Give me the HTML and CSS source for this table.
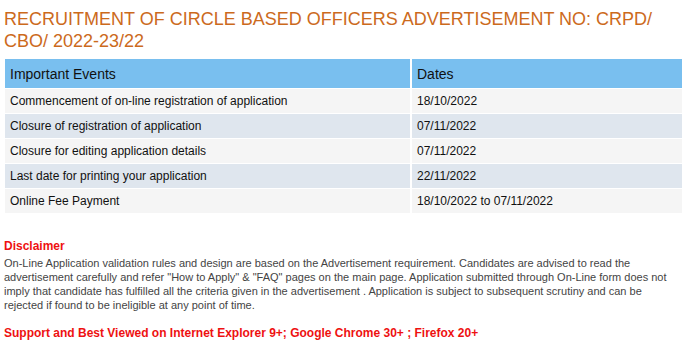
FILE: index.html
```html
<!DOCTYPE html>
<html>
<head>
<meta charset="utf-8">
<link rel="stylesheet" href="styles.css">
</head>
<body>
<div class="page">
  <h1 class="title">RECRUITMENT OF CIRCLE BASED OFFICERS ADVERTISEMENT NO: CRPD/ CBO/ 2022-23/22</h1>
  <table class="events">
    <thead>
      <tr><th class="c1">Important Events</th><th class="c2">Dates</th></tr>
    </thead>
    <tbody>
      <tr><td class="c1">Commencement of on-line registration of application</td><td class="c2">18/10/2022</td></tr>
      <tr><td class="c1">Closure of registration of application</td><td class="c2">07/11/2022</td></tr>
      <tr><td class="c1">Closure for editing application details</td><td class="c2">07/11/2022</td></tr>
      <tr><td class="c1">Last date for printing your application</td><td class="c2">22/11/2022</td></tr>
      <tr><td class="c1">Online Fee Payment</td><td class="c2">18/10/2022 to 07/11/2022</td></tr>
    </tbody>
  </table>
  <div class="disclaimer">
    <h2 class="disc-title">Disclaimer</h2>
    <p class="disc-text">On-Line Application validation rules and design are based on the Advertisement requirement. Candidates are advised to read the advertisement carefully and refer "How to Apply" &amp; "FAQ" pages on the main page. Application submitted through On-Line form does not imply that candidate has fulfilled all the criteria given in the advertisement . Application is subject to subsequent scrutiny and can be rejected if found to be ineligible at any point of time.</p>
    <p class="support">Support and Best Viewed on Internet Explorer 9+; Google Chrome 30+ ; Firefox 20+</p>
  </div>
</div>
</body>
</html>
```
FILE: styles.css
```css
html, body {
  margin: 0;
  padding: 0;
  background: #ffffff;
}
body {
  font-family: "Liberation Sans", Arial, sans-serif;
}
.page {
  padding: 8px 3px 0 4px;
}
.title {
  margin: 0 0 7px 0;
  font-size: 18px;
  font-weight: normal;
  line-height: 22px;
  color: #cc6a1c;
}
.events {
  width: 677px;
  margin-left: 1px;
  border-collapse: collapse;
  font-size: 12px;
  color: #111;
}
.events th {
  background: #79bfef;
  font-size: 14px;
  font-weight: normal;
  text-align: left;
  height: 29px;
  padding: 0 5px;
  border-bottom: 1px solid #fff;
}
.events td {
  height: 24px;
  padding: 0 5px;
  border-bottom: 1px solid #fff;
}
.events .c1 {
  width: 395px;
  border-right: 2px solid #fff;
}
.events tbody tr:nth-child(odd) td {
  background: #f5f5f5;
}
.events tbody tr:nth-child(even) td {
  background: #dfe6ee;
}
.disclaimer {
  padding: 23px 0 0 0;
}
.disc-title {
  margin: 0;
  font-size: 12px;
  font-weight: bold;
  color: #ee1111;
  line-height: 19px;
}
.disc-text {
  margin: 0;
  font-size: 11px;
  line-height: 14px;
  color: #444;
}
.support {
  margin: 14px 0 0 0;
  font-size: 12px;
  font-weight: bold;
  color: #ee1111;
  line-height: 15px;
}
```
